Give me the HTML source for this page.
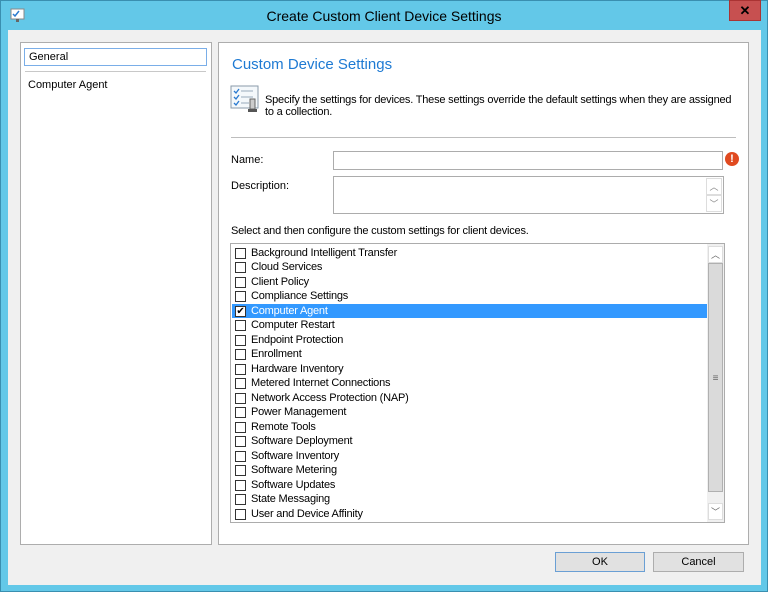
<!DOCTYPE html>
<html><head><style>
*{margin:0;padding:0;box-sizing:border-box}
body{width:768px;height:592px;overflow:hidden;background:#63c8e8;font-family:"Liberation Sans",sans-serif;font-size:11px;color:#000;position:relative}
.a{position:absolute}
.win{left:0;top:0;width:768px;height:592px;border:1px solid #3a8fb0;background:#63c8e8}
.client{left:8px;top:30px;width:753px;height:555px;background:#f0f0f0}
.title{left:0;top:8px;width:768px;text-align:center;font-size:14px;color:#000}
.close{left:729px;top:0;width:32px;height:21px;background:#c75050;border:1px solid #a33;color:#000;font-weight:bold;text-align:center;line-height:20px;font-size:13px}
.panel{background:#fff;border:1px solid #adadad}
.row{position:absolute;left:1px;width:475px;height:14.5px;line-height:14.5px;padding-left:19px;font-size:11px;letter-spacing:-0.2px}
.cb{position:absolute;left:3px;top:2px;width:11px;height:11px;border:1px solid #333;background:#fff}
.btn{background:#e1e1e1;border:1px solid #adadad;text-align:center;line-height:18px;font-size:11px}
</style></head><body>
<div class="a win"></div>
<div class="a title">Create Custom Client Device Settings</div>
<div class="a close">✕</div>
<svg class="a" style="left:10px;top:8px" width="16" height="16"><rect x="1" y="1" width="13" height="10" fill="#fff" stroke="#888"/><path d="M3 6l2 2 4-5" stroke="#2a7ad0" stroke-width="1.5" fill="none"/><rect x="6" y="11" width="3" height="3" fill="#666"/></svg>
<div class="a client"></div>
<div class="a panel" style="left:20px;top:42px;width:192px;height:503px"></div>
<div class="a" style="left:24px;top:48px;width:183px;height:18px;border:1px solid #7aaee8;padding-left:4px;line-height:16px">General</div>
<div class="a" style="left:25px;top:71px;width:181px;height:1px;background:#c8c8c8"></div>
<div class="a" style="left:28px;top:79px">Computer Agent</div>
<div class="a panel" style="left:218px;top:42px;width:531px;height:503px"></div>
<div class="a" style="left:232px;top:56px;font-size:15px;color:#1e7ad3">Custom Device Settings</div>
<svg class="a" style="left:230px;top:85px" width="32" height="30"><rect x="1" y="1" width="27" height="22" fill="#f4f8fb" stroke="#8a9aa8"/><path d="M4 6l2 2 3-4M4 12l2 2 3-4M4 18l2 2 3-4" stroke="#2a7ad0" stroke-width="1.3" fill="none"/><path d="M11 6h12M11 12h12M11 18h8" stroke="#9ab" /><rect x="20" y="14" width="5" height="10" fill="#ccc" stroke="#666"/><rect x="18" y="24" width="9" height="3" fill="#555"/></svg>
<div class="a" style="left:265px;top:94px;width:474px;line-height:12px;letter-spacing:-0.2px">Specify the settings for devices. These settings override the default settings when they are assigned to a collection.</div>
<div class="a" style="left:231px;top:137px;width:505px;height:1px;background:#bdbdbd"></div>
<div class="a" style="left:231px;top:154px">Name:</div>
<div class="a" style="left:333px;top:151px;width:390px;height:19px;background:#fff;border:1px solid #acacac"></div>
<div class="a" style="left:725px;top:152px;width:14px;height:14px;border-radius:50%;background:#e04a20;color:#fff;font-weight:bold;font-size:11px;text-align:center;line-height:14px">!</div>
<div class="a" style="left:231px;top:180px">Description:</div>
<div class="a" style="left:333px;top:176px;width:391px;height:38px;background:#fff;border:1px solid #acacac"></div>
<div class="a" style="left:706px;top:178px;width:16px;height:17px;border:1px solid #ddd;color:#888;text-align:center;font-size:9px;line-height:16px">︿</div>
<div class="a" style="left:706px;top:195px;width:16px;height:17px;border:1px solid #ddd;color:#888;text-align:center;font-size:9px;line-height:16px">﹀</div>
<div class="a" style="left:231px;top:225px;letter-spacing:-0.2px">Select and then configure the custom settings for client devices.</div>
<div class="a" style="left:230px;top:243px;width:495px;height:280px;background:#fff;border:1px solid #acacac">
<div class="row" style="top:1.5px"><span class="cb"></span>Background Intelligent Transfer</div>
<div class="row" style="top:16px"><span class="cb"></span>Cloud Services</div>
<div class="row" style="top:30.5px"><span class="cb"></span>Client Policy</div>
<div class="row" style="top:45px"><span class="cb"></span>Compliance Settings</div>
<div class="row" style="top:59.5px;background:#3399ff;color:#fff;padding-left:19px"><span class="cb" style="color:#000;font-size:10px;line-height:9px;text-align:center">✔</span>Computer Agent</div>
<div class="row" style="top:74px"><span class="cb"></span>Computer Restart</div>
<div class="row" style="top:88.5px"><span class="cb"></span>Endpoint Protection</div>
<div class="row" style="top:103px"><span class="cb"></span>Enrollment</div>
<div class="row" style="top:117.5px"><span class="cb"></span>Hardware Inventory</div>
<div class="row" style="top:132px"><span class="cb"></span>Metered Internet Connections</div>
<div class="row" style="top:146.5px"><span class="cb"></span>Network Access Protection (NAP)</div>
<div class="row" style="top:161px"><span class="cb"></span>Power Management</div>
<div class="row" style="top:175.5px"><span class="cb"></span>Remote Tools</div>
<div class="row" style="top:190px"><span class="cb"></span>Software Deployment</div>
<div class="row" style="top:204.5px"><span class="cb"></span>Software Inventory</div>
<div class="row" style="top:219px"><span class="cb"></span>Software Metering</div>
<div class="row" style="top:233.5px"><span class="cb"></span>Software Updates</div>
<div class="row" style="top:248px"><span class="cb"></span>State Messaging</div>
<div class="row" style="top:262.5px"><span class="cb"></span>User and Device Affinity</div>
<div class="a" style="left:476px;top:0;width:17px;height:278px;background:#f0f0f0"></div>
<div class="a" style="left:477px;top:2px;width:15px;height:17px;border:1px solid #ddd;background:#fff;color:#666;text-align:center;font-size:9px;line-height:16px">︿</div>
<div class="a" style="left:477px;top:19px;width:15px;height:229px;background:#dadada;border:1px solid #b0b0b0;color:#666;text-align:center;line-height:229px;font-size:10px">≡</div>
<div class="a" style="left:477px;top:259px;width:15px;height:17px;border:1px solid #ddd;background:#fff;color:#666;text-align:center;font-size:9px;line-height:16px">﹀</div>
</div>
<div class="a btn" style="left:555px;top:552px;width:90px;height:20px;border-color:#6a9fd4">OK</div>
<div class="a btn" style="left:653px;top:552px;width:91px;height:20px">Cancel</div>
</body></html>
